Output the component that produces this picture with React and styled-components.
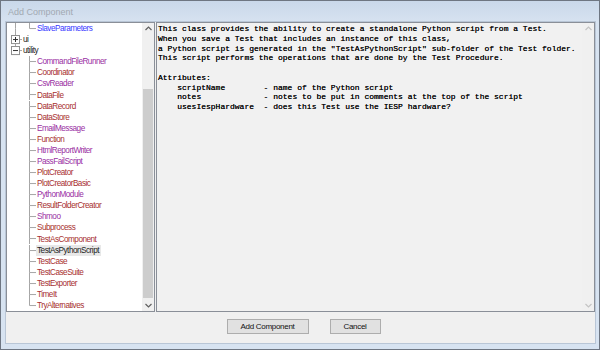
import React from 'react'
import styled, { createGlobalStyle } from 'styled-components'

const BLUE = '#3a3aff'
const PURPLE = '#9a2fa3'
const RED = '#a8302f'

const children = [
  ['CommandFileRunner', PURPLE],
  ['Coordinator', RED],
  ['CsvReader', PURPLE],
  ['DataFile', RED],
  ['DataRecord', RED],
  ['DataStore', RED],
  ['EmailMessage', PURPLE],
  ['Function', RED],
  ['HtmlReportWriter', PURPLE],
  ['PassFailScript', PURPLE],
  ['PlotCreator', RED],
  ['PlotCreatorBasic', RED],
  ['PythonModule', PURPLE],
  ['ResultFolderCreator', RED],
  ['Shmoo', PURPLE],
  ['Subprocess', RED],
  ['TestAsComponent', RED],
  ['TestAsPythonScript', '#222', true],
  ['TestCase', RED],
  ['TestCaseSuite', RED],
  ['TestExporter', RED],
  ['TimeIt', RED],
  ['TryAlternatives', RED],
]

const rows = [
  { label: 'SlaveParameters', color: BLUE, guides: ['pipe', 'elbow'] },
  { label: 'ui', color: '#222', guides: ['plusTee'] },
  { label: 'utility', color: '#222', guides: ['minusElbow'] },
  ...children.map(([label, color, selected], i) => ({
    label,
    color,
    selected,
    guides: ['blank', i === children.length - 1 ? 'elbow' : 'tee'],
  })),
]

const description = `This class provides the ability to create a standalone Python script from a Test.
When you save a Test that includes an instance of this class,
a Python script is generated in the "TestAsPythonScript" sub-folder of the Test folder.
This script performs the operations that are done by the Test Procedure.

Attributes:
    scriptName        - name of the Python script
    notes             - notes to be put in comments at the top of the script
    usesIespHardware  - does this Test use the IESP hardware?`

const GlobalStyle = createGlobalStyle`
  body {
    margin: 0;
    background: #fff;
  }
  * {
    box-sizing: border-box;
  }
`

const Window = styled.div`
  width: 600px;
  height: 350px;
  border: 1px solid #6e7682;
  background: #d7e3f1;
  display: flex;
  flex-direction: column;
`

const TitleBar = styled.div`
  height: 20px;
  padding: 2px 0 0 7px;
  display: flex;
  align-items: center;
  background: linear-gradient(#c9d8ea, #d6e2f0);
  font-family: 'Liberation Sans', Arial, sans-serif;
  font-size: 9px;
  color: #a2a9b2;
`

const Client = styled.div`
  flex: 1;
  margin: 0 3px 5px 4px;
  border: 1px solid #b9c6d6;
  background: #f0f0f0;
  display: flex;
  flex-direction: column;
`

const Panels = styled.div`
  height: 290px;
  display: flex;
  gap: 1px;
`

const TreePanel = styled.div`
  width: 149px;
  border: 1px solid #8a8f98;
  background: #fff;
  display: flex;
`

const TreeList = styled.div`
  flex: 1;
  padding: 0 0 0 1px;
  overflow: hidden;
`

const Row = styled.div`
  height: 11.08px;
  display: flex;
  align-items: stretch;
  font-family: 'Liberation Sans', Arial, sans-serif;
  font-size: 8.2px;
  letter-spacing: -0.5px;
  white-space: nowrap;
`

const Label = styled.span`
  display: flex;
  align-items: center;
  padding: 0 2px 0 1px;
  color: ${(p) => p.$color};
  background: ${(p) => (p.$selected ? '#e8e8e8' : 'transparent')};
`

const GuideCell = styled.svg`
  width: 14px;
  height: 100%;
  flex: none;
`

const ScrollBar = styled.div`
  width: 12px;
  background: #f0f0f0;
  display: flex;
  flex-direction: column;
`

const Arrow = styled.div`
  height: 11px;
  display: flex;
  align-items: center;
  justify-content: center;
`

const Track = styled.div`
  flex: 1;
  display: flex;
  flex-direction: column;
`

const Thumb = styled.div`
  margin: ${(p) => p.$top}px 1px 0 1px;
  height: ${(p) => p.$size}px;
  background: #cdcdcd;
`

const TextPanel = styled.div`
  flex: 1;
  border: 1px solid #8a8f98;
  background: #f1f1f1;
  display: flex;
`

const TextBody = styled.pre`
  flex: 1;
  margin: 0;
  padding: 1px 0 0 1px;
  font-family: 'Liberation Mono', 'Courier New', monospace;
  font-size: 8px;
  line-height: 9.75px;
  color: #000;
  text-shadow: 0 0 0.2px #333;
  overflow: hidden;
`

const Footer = styled.div`
  flex: 1;
  display: flex;
  justify-content: center;
  align-items: flex-start;
  gap: 21px;
  padding: 7px 0 0 6px;
`

const Button = styled.button`
  width: ${(p) => p.$width}px;
  height: 15px;
  padding: 0;
  border: 1px solid #adadad;
  background: #e1e1e1;
  font-family: 'Liberation Sans', Arial, sans-serif;
  font-size: 8px;
  letter-spacing: -0.3px;
  color: #111;
`

const LINE = '#a6a6a6'

const Guide = ({ kind }) => {
  const box = kind === 'plusTee' || kind === 'minusElbow'
  const down = kind === 'pipe' || kind === 'tee' || kind === 'plusTee'
  return (
    <GuideCell viewBox="0 0 14 11" preserveAspectRatio="none">
      {kind !== 'blank' && (
        <>
          <line x1="7.5" y1="0" x2="7.5" y2={box ? 2 : 5.5} stroke={LINE} />
          {down && <line x1="7.5" y1={box ? 9 : 5.5} x2="7.5" y2="11" stroke={LINE} />}
          {kind !== 'pipe' && <line x1={box ? 11 : 7.5} y1="5.5" x2="14" y2="5.5" stroke={LINE} />}
        </>
      )}
      {box && (
        <>
          <rect x="3.5" y="1.5" width="8" height="8" fill="#fff" stroke="#8f8f8f" />
          <line x1="5" y1="5.5" x2="10" y2="5.5" stroke="#333" />
          {kind === 'plusTee' && <line x1="7.5" y1="3" x2="7.5" y2="8" stroke="#333" />}
        </>
      )}
    </GuideCell>
  )
}

const Chevron = ({ up, color }) => (
  <svg width="7" height="5" viewBox="0 0 7 5">
    <polyline
      points={up ? '0.5,4 3.5,1 6.5,4' : '0.5,1 3.5,4 6.5,1'}
      fill="none"
      stroke={color}
      strokeWidth="1.2"
    />
  </svg>
)

const App = () => {
  return (
    <>
      <GlobalStyle />
      <Window>
        <TitleBar>Add Component</TitleBar>
        <Client>
          <Panels>
            <TreePanel>
              <TreeList>
                {rows.map((row) => (
                  <Row key={row.label}>
                    {row.guides.map((g, i) => (
                      <Guide key={i} kind={g} />
                    ))}
                    <Label $color={row.color} $selected={row.selected}>
                      {row.label}
                    </Label>
                  </Row>
                ))}
              </TreeList>
              <ScrollBar>
                <Arrow>
                  <Chevron up color="#606060" />
                </Arrow>
                <Track>
                  <Thumb $top={55} $size={209} />
                </Track>
                <Arrow>
                  <Chevron color="#606060" />
                </Arrow>
              </ScrollBar>
            </TreePanel>
            <TextPanel>
              <TextBody>{description}</TextBody>
              <ScrollBar>
                <Arrow>
                  <Chevron up color="#c4c4c4" />
                </Arrow>
                <Track />
                <Arrow>
                  <Chevron color="#c4c4c4" />
                </Arrow>
              </ScrollBar>
            </TextPanel>
          </Panels>
          <Footer>
            <Button $width={82}>Add Component</Button>
            <Button $width={51}>Cancel</Button>
          </Footer>
        </Client>
      </Window>
    </>
  )
}

export default App
